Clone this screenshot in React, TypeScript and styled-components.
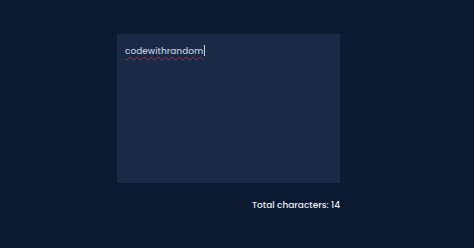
import React from "react";
import styled, { createGlobalStyle } from "styled-components";

const Global = createGlobalStyle`
  html, body { margin: 0; padding: 0; background: #0b1a30; }
  body { font-family: Poppins, "Open Sans", "Noto Sans", sans-serif; }
`;

const Page = styled.div`
  width: 474px;
  height: 248px;
  background: #0b1a30;
  display: flex;
  justify-content: flex-start;
  padding: 34px 0 0 117px;
  box-sizing: border-box;
`;

const Column = styled.div`
  width: 223px;
  display: flex;
  flex-direction: column;
  align-items: stretch;
`;

const Editor = styled.div`
  height: 149px;
  background: #182a46;
  box-sizing: border-box;
  padding: 10px 8px;
  font-size: 9px;
  line-height: 14px;
  color: #b9c3d8;
  font-weight: 500;
`;

const Word = styled.span`
  text-decoration: underline wavy #a02a40;
  text-decoration-thickness: 1px;
  text-underline-offset: 2px;
`;

const Caret = styled.span`
  display: inline-block;
  width: 1px;
  height: 11px;
  background: #c8d0e0;
  vertical-align: -2px;
  margin-left: 1px;
`;

const Counter = styled.div`
  margin-top: 16px;
  text-align: right;
  font-size: 9px;
  font-weight: 500;
  color: #e6ebf3;
`;

export default function App() {
  return (
    <>
      <Global />
      <Page>
        <Column>
          <Editor>
            <Word>codewithrandom</Word>
            <Caret />
          </Editor>
          <Counter>Total characters: 14</Counter>
        </Column>
      </Page>
    </>
  );
}
